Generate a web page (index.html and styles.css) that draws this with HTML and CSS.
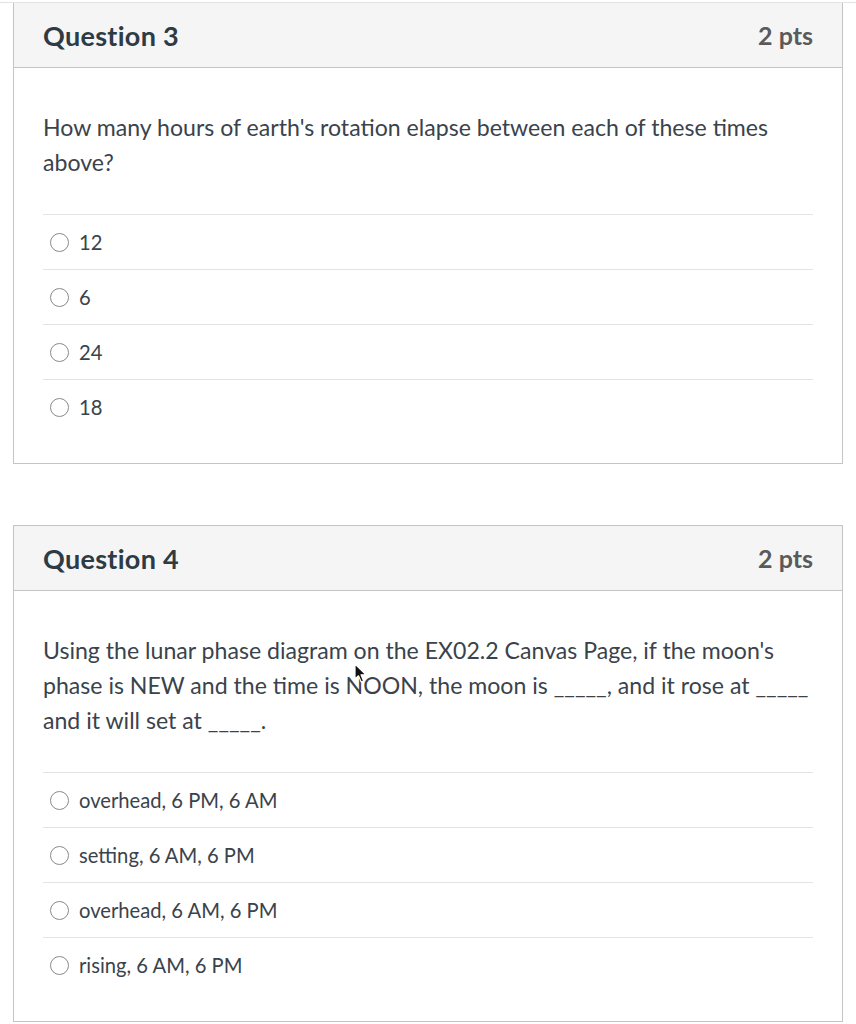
FILE: index.html
```html
<!DOCTYPE html>
<html>
<head>
<meta charset="utf-8">
<link rel="stylesheet" href="styles.css">
</head>
<body>
<div class="page">
  <section class="card first">
    <header class="card-head">
      <h2 class="title">Question 3</h2>
      <span class="pts">2 pts</span>
    </header>
    <div class="card-body">
      <p class="qtext">How many hours of earth's rotation elapse between each of these times above?</p>
      <ul class="answers">
        <li class="answer"><span class="radio"></span><span class="label">12</span></li>
        <li class="answer"><span class="radio"></span><span class="label">6</span></li>
        <li class="answer"><span class="radio"></span><span class="label">24</span></li>
        <li class="answer"><span class="radio"></span><span class="label">18</span></li>
      </ul>
    </div>
  </section>

  <section class="card">
    <header class="card-head">
      <h2 class="title">Question 4</h2>
      <span class="pts">2 pts</span>
    </header>
    <div class="card-body cursor-host">
      <p class="qtext">Using the lunar phase diagram on the EX02.2 Canvas Page, if the moon's phase is NEW and the time is NOON, the moon is _____, and it rose at _____ and it will set at _____.</p>
      <ul class="answers">
        <li class="answer"><span class="radio"></span><span class="label">overhead, 6 PM, 6 AM</span></li>
        <li class="answer"><span class="radio"></span><span class="label">setting, 6 AM, 6 PM</span></li>
        <li class="answer"><span class="radio"></span><span class="label">overhead, 6 AM, 6 PM</span></li>
        <li class="answer"><span class="radio"></span><span class="label">rising, 6 AM, 6 PM</span></li>
      </ul>
      <svg class="cursor" width="14" height="21" viewBox="0 0 14 21">
        <path d="M1 1 L1 16 L4.5 12.8 L7.2 19 L9.6 18 L7 11.8 L12 11.8 Z" fill="#111" stroke="#fff" stroke-width="1.2" stroke-linejoin="round"/>
      </svg>
    </div>
  </section>
</div>
</body>
</html>
```
FILE: styles.css
```css
html, body {
  margin: 0;
  padding: 0;
  background: #ffffff;
}

body {
  font-family: Lato, "Open Sans", "Liberation Sans", sans-serif;
  color: #2d3b45;
}

.page {
  margin-top: 2px;
  border-top: 1px solid #e2e2e2;
  width: 856px;
}

.card {
  box-sizing: border-box;
  width: 830px;
  margin: 61px 0 0 13px;
  border: 1px solid #c4c4c4;
  background: #fff;
}

.card.first {
  margin-top: 0;
  border-top: none;
}

.card-head {
  box-sizing: border-box;
  height: 65px;
  padding: 0 29px;
  background: #f5f5f5;
  border-bottom: 1px solid #c4c4c4;
  display: flex;
  align-items: center;
  justify-content: space-between;
}

.title {
  margin: 0;
  font-size: 27px;
  font-weight: 700;
  letter-spacing: 0.3px;
  color: #2d3b45;
}

.pts {
  font-size: 25px;
  font-weight: 700;
  color: #5a5a5a;
}

.card-body {
  padding: 42px 29px 29px;
}

.cursor-host {
  position: relative;
}

.qtext {
  margin: 0 0 34px;
  font-size: 23.1px;
  line-height: 35px;
  color: #3a434b;
}

.answers {
  list-style: none;
  margin: 0;
  padding: 0;
}

.answer {
  box-sizing: border-box;
  height: 55px;
  border-top: 1px solid #e3e3e3;
  display: flex;
  align-items: center;
  padding-left: 7px;
}

.radio {
  box-sizing: border-box;
  width: 19px;
  height: 19px;
  border: 1.5px solid #8a8a8a;
  border-radius: 50%;
  margin-right: 10px;
  flex: none;
}

.label {
  font-size: 20.2px;
  color: #3a434b;
}

.cursor {
  position: absolute;
  left: 340px;
  top: 72px;
}
```
